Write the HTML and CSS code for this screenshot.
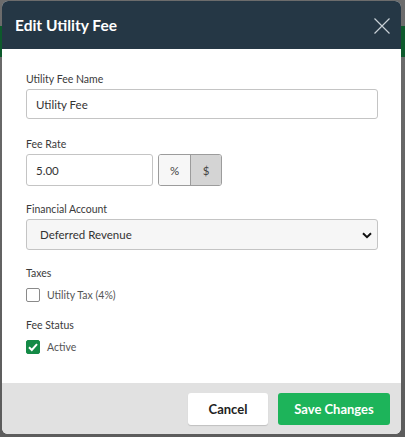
FILE: index.html
```html
<!DOCTYPE html>
<html>
<head>
<meta charset="utf-8">
<link rel="stylesheet" href="styles.css">
</head>
<body>
<div class="backdrop">
  <div class="page-bar"></div>
</div>
<div class="modal">
  <div class="modal-header">
    <h1 class="modal-title">Edit Utility Fee</h1>
    <button class="close-btn" aria-label="Close">
      <svg width="16" height="16" viewBox="0 0 16 16"><path d="M0.5 0.5 L15.5 15.5 M15.5 0.5 L0.5 15.5" stroke="#c8d0d6" stroke-width="1.2" fill="none"/></svg>
    </button>
  </div>
  <div class="modal-body">
    <div class="field field-first">
      <label class="field-label">Utility Fee Name</label>
      <input class="text-input" type="text" value="Utility Fee">
    </div>
    <div class="field field-rate">
      <label class="field-label">Fee Rate</label>
      <div class="rate-row">
        <input class="text-input rate-input" type="text" value="5.00">
        <div class="toggle">
          <span class="toggle-opt">%</span>
          <span class="toggle-opt toggle-active">$</span>
        </div>
      </div>
    </div>
    <div class="field">
      <label class="field-label">Financial Account</label>
      <div class="select">
        <span>Deferred Revenue</span>
        <svg class="chevron" width="10" height="7" viewBox="0 0 10 7"><path d="M1 1.2 L5 5.2 L9 1.2" stroke="#111" stroke-width="2" fill="none"/></svg>
      </div>
    </div>
    <div class="field">
      <label class="field-label">Taxes</label>
      <div class="check-row">
        <span class="checkbox"></span>
        <span class="check-text">Utility Tax (4%)</span>
      </div>
    </div>
    <div class="field field-status">
      <label class="field-label">Fee Status</label>
      <div class="check-row">
        <span class="checkbox checked">
          <svg width="14" height="14" viewBox="0 0 14 14"><path d="M3 7.2 L5.8 10 L11 4.2" stroke="#fff" stroke-width="2" fill="none"/></svg>
        </span>
        <span class="check-text">Active</span>
      </div>
    </div>
  </div>
  <div class="modal-footer">
    <button class="btn btn-cancel">Cancel</button>
    <button class="btn btn-save">Save Changes</button>
  </div>
</div>
</body>
</html>
```
FILE: styles.css
```css
* { box-sizing: border-box; }
html, body {
  margin: 0;
  padding: 0;
  width: 405px;
  height: 437px;
  overflow: hidden;
  font-family: Lato, "Open Sans", Arial, sans-serif;
}
body { background: #6a6a6a; }
.backdrop {
  height: 437px;
  padding-top: 26px;
  background: linear-gradient(#6c6c6c, #5c5c5c);
}
.page-bar {
  height: 31px;
  background: #0d5a2c;
}
.modal {
  position: absolute;
  left: 2px;
  top: 1px;
  width: 399px;
  height: 433px;
  background: #fff;
  border-radius: 6px;
  overflow: hidden;
  display: flex;
  flex-direction: column;
}
.modal-header {
  height: 48px;
  background: #253745;
  display: flex;
  align-items: center;
  justify-content: space-between;
  padding: 0 11px 0 13px;
  flex-shrink: 0;
}
.modal-title {
  margin: 0;
  color: #fff;
  font-size: 15.5px;
  font-weight: 700;
  letter-spacing: 0;
}
.close-btn {
  border: 0;
  background: none;
  padding: 0;
  width: 16px;
  height: 16px;
  margin-top: 2px;
  display: flex;
}
.modal-body {
  flex: 1;
  padding: 24px 23px 0 24px;
}
.field { margin-bottom: 17px; display: flex; flex-direction: column; }
.field-first { margin-bottom: 19px; }
.field-label {
  font-size: 10.5px;
  line-height: 12px;
  color: #3a3a3a;
  margin-bottom: 4px;
}
.text-input {
  height: 30px;
  border: 1px solid #c4c4c4;
  border-radius: 3px;
  padding: 0 9px;
  font-family: inherit;
  font-size: 11.5px;
  color: #333;
  background: #fff;
  outline: none;
  width: 100%;
}
.rate-row { display: flex; align-items: flex-start; gap: 5px; }
.rate-input { width: 127px; height: 32px; }
.toggle {
  display: flex;
  height: 32px;
  border: 1px solid #9c9c9c;
  border-radius: 3px;
  overflow: hidden;
}
.toggle-opt {
  width: 31px;
  display: flex;
  align-items: center;
  justify-content: center;
  font-size: 11.5px;
  color: #444;
  background: #f7f7f7;
}
.toggle-active {
  background: #d4d4d4;
  border-left: 1px solid #9c9c9c;
}
.select {
  height: 31px;
  border: 1px solid #c4c4c4;
  border-radius: 3px;
  background: #f6f6f6;
  display: flex;
  align-items: center;
  justify-content: space-between;
  padding: 0 5px 0 13px;
  font-size: 11.5px;
  color: #333;
}
.chevron { margin-top: 1px; }
.check-row {
  display: flex;
  align-items: center;
  gap: 7px;
  margin-top: 5px;
  height: 14px;
}
.checkbox {
  width: 14px;
  height: 14px;
  border: 1px solid #8a8a8a;
  border-radius: 2px;
  background: #fff;
  display: flex;
}
.checkbox.checked {
  background: #148a46;
  border-color: #148a46;
}
.checkbox.checked svg { margin: -1px; }
.check-text { font-size: 10.5px; color: #555; }
.modal-footer {
  height: 51px;
  flex-shrink: 0;
  background: #e1e1e1;
  display: flex;
  justify-content: flex-end;
  align-items: flex-start;
  gap: 10px;
  padding: 10px 11px 0 0;
}
.btn {
  height: 32px;
  border: 0;
  border-radius: 3px;
  font-family: inherit;
  font-weight: 700;
  font-size: 13px;
}
.btn-cancel {
  width: 80px;
  background: #fff;
  color: #222;
  box-shadow: 0 1px 1px rgba(0,0,0,0.15);
}
.btn-save {
  width: 112px;
  background: #1db45a;
  color: #fff;
}
```
